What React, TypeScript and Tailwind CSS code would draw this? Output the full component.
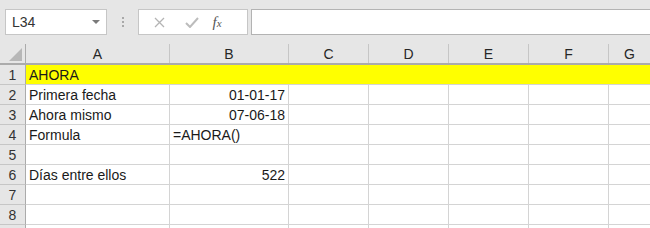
import React from 'react';

type Row = { n: number; a?: string; b?: string; bRight?: boolean; fill?: boolean };

const rows: Row[] = [
  { n: 1, a: 'AHORA', fill: true },
  { n: 2, a: 'Primera fecha', b: '01-01-17', bRight: true },
  { n: 3, a: 'Ahora mismo', b: '07-06-18', bRight: true },
  { n: 4, a: 'Formula', b: '=AHORA()' },
  { n: 5 },
  { n: 6, a: 'Días entre ellos', b: '522', bRight: true },
  { n: 7 },
  { n: 8 },
];

const cols = ['A', 'B', 'C', 'D', 'E', 'F', 'G'];
const widths = ['w-[144px]', 'w-[119px]', 'w-[80px]', 'w-[80px]', 'w-[80px]', 'w-[80px]', 'flex-1'];

const App: React.FC = () => {
  return (
    <div className="w-[650px] h-[228px] overflow-hidden bg-white font-['Liberation_Sans',Arial,sans-serif] text-[14px] text-[#1a1a1a]">
      {/* Formula bar */}
      <div className="h-[44px] bg-[#e6e6e6] flex items-start pt-[9px] pl-[5px]">
        <div className="w-[102px] h-[26px] bg-white border border-[#c6c6c6] flex items-center justify-between pl-[6px] pr-[6px]">
          <span className="text-[14px] text-[#333]">L34</span>
          <svg width="8" height="5" viewBox="0 0 8 5" className="mt-[1px]">
            <path d="M0 0 L8 0 L4 4 Z" fill="#7a7a7a" />
          </svg>
        </div>
        <div className="w-[31px] h-[26px] flex flex-col items-center justify-center gap-[2px]">
          <span className="w-[2px] h-[2px] bg-[#a8a8a8]" />
          <span className="w-[2px] h-[2px] bg-[#a8a8a8]" />
          <span className="w-[2px] h-[2px] bg-[#a8a8a8]" />
        </div>
        <div className="w-[110px] h-[26px] bg-white border border-[#c6c6c6] flex items-center">
          <div className="w-[40px] flex justify-center">
            <svg width="11" height="11" viewBox="0 0 11 11">
              <path d="M1 1 L10 10 M10 1 L1 10" stroke="#b4b4b4" strokeWidth="1.3" />
            </svg>
          </div>
          <div className="w-[26px] flex justify-center">
            <svg width="14" height="11" viewBox="0 0 14 11">
              <path d="M1 6 L5 10 L13 1" stroke="#bcbcbc" strokeWidth="2" fill="none" />
            </svg>
          </div>
          <div className="w-[24px] flex justify-center">
            <span className="font-['Liberation_Serif',serif] italic text-[15px] text-[#555] leading-none">
              f<span className="text-[11px]">x</span>
            </span>
          </div>
        </div>
        <div className="ml-[3px] flex-1 h-[26px] bg-white border-y border-l border-[#b3b3b3]" />
      </div>

      {/* Column headers */}
      <div className="flex h-[21px] bg-[#e6e6e6] border-b-2 border-[#ababab]">
        <div className="w-[26px] border-r border-[#ababab] relative">
          <svg width="13" height="13" viewBox="0 0 13 13" className="absolute right-[3px] bottom-[2px]">
            <path d="M13 0 L13 13 L0 13 Z" fill="#b7b7b7" />
          </svg>
        </div>
        {cols.map((c, i) => (
          <div
            key={c}
            className={`${widths[i]} ${i < cols.length - 1 ? 'border-r border-[#c6c6c6]' : ''} flex items-center justify-center pt-[1px] text-[14px] text-[#262626]`}
          >
            {c}
          </div>
        ))}
      </div>

      {/* Rows */}
      {rows.map((r) => (
        <div key={r.n} className="flex h-[20px]">
          <div className="w-[26px] bg-[#e6e6e6] border-r border-b border-r-[#ababab] border-b-[#c6c6c6] flex items-center justify-center pt-[2px] text-[14px] text-[#333]">
            {r.n}
          </div>
          {cols.map((c, i) => {
            const text = i === 0 ? r.a : i === 1 ? r.b : undefined;
            const right = i === 1 && r.bRight;
            return (
              <div
                key={c}
                className={`${widths[i]} ${r.fill ? 'bg-[#ffff00] border-b border-[#d4d4d4]' : `border-b border-[#d4d4d4] ${i < cols.length - 1 ? 'border-r' : ''}`} flex items-center pt-[2px] whitespace-nowrap ${right ? 'justify-end pr-[3px]' : 'pl-[3px]'}`}
              >
                {text}
              </div>
            );
          })}
        </div>
      ))}
      <div className="flex h-[20px]">
        <div className="w-[26px] bg-[#e6e6e6] border-r border-[#ababab]" />
        {cols.map((c, i) => (
          <div key={c} className={`${widths[i]} ${i < cols.length - 1 ? 'border-r border-[#d4d4d4]' : ''}`} />
        ))}
      </div>
    </div>
  );
};

export default App;
